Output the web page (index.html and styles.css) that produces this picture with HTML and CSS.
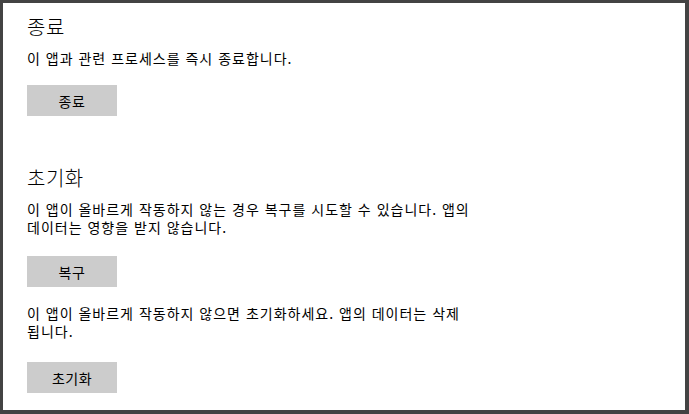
FILE: index.html
```html
<!DOCTYPE html>
<html lang="ko">
<head>
<meta charset="utf-8">
<link rel="stylesheet" href="styles.css">
</head>
<body>
<div class="panel">
  <section class="section">
    <h2 class="title">종료</h2>
    <p class="desc">이 앱과 관련 프로세스를 즉시 종료합니다.</p>
    <button class="btn">종료</button>
  </section>
  <section class="section section-reset">
    <h2 class="title">초기화</h2>
    <p class="desc">이 앱이 올바르게 작동하지 않는 경우 복구를 시도할 수 있습니다. 앱의 데이터는 영향을 받지 않습니다.</p>
    <button class="btn btn-repair">복구</button>
    <p class="desc desc-gap">이 앱이 올바르게 작동하지 않으면 초기화하세요. 앱의 데이터는 삭제 됩니다.</p>
    <button class="btn btn-reset">초기화</button>
  </section>
</div>
</body>
</html>
```

FILE: styles.css
```css
html, body {
  margin: 0;
  padding: 0;
  background: #ffffff;
}
body {
  font-family: "Noto Sans CJK KR", "Noto Sans", sans-serif;
  color: #000;
}
.panel {
  box-sizing: border-box;
  width: 689px;
  height: 414px;
  border-style: solid;
  border-color: #434343;
  border-width: 3px 4px 4px 3px;
  padding: 10px 0 0 24px;
  overflow: hidden;
}
.section {
  display: flex;
  flex-direction: column;
  align-items: flex-start;
}
.section-reset {
  margin-top: 48px;
}
.title {
  margin: 0;
  font-size: 20px;
  font-weight: 300;
  line-height: 28px;
  letter-spacing: 0.5px;
}
.desc {
  margin: 8px 0 0 0;
  width: 465px;
  font-size: 14px;
  font-weight: 400;
  line-height: 18px;
  letter-spacing: 1px;
  word-break: keep-all;
}
.desc-gap {
  margin-top: 17px;
}
.btn {
  margin-top: 18px;
  width: 90px;
  height: 31px;
  border: none;
  background: #cccccc;
  font-family: inherit;
  font-size: 14px;
  letter-spacing: 0.5px;
  color: #000;
  padding: 0;
}
.btn-repair {
  margin-top: 20px;
}
.btn-reset {
  margin-top: 22px;
}
```
